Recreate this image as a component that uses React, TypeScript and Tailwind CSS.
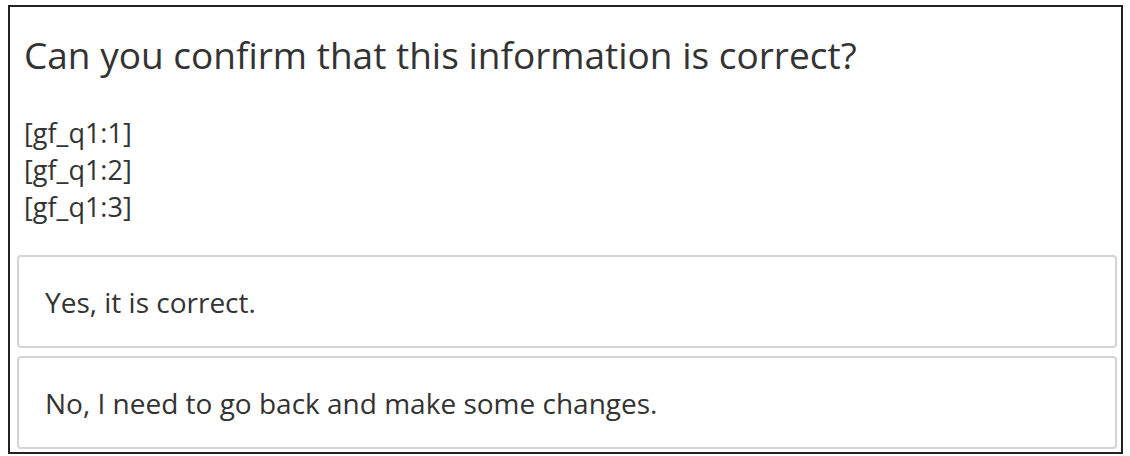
import React from 'react';

const fields = ['[gf_q1:1]', '[gf_q1:2]', '[gf_q1:3]'];
const choices = ['Yes, it is correct.', 'No, I need to go back and make some changes.'];

export default function App() {
    return (
        <div className="w-[1130px] h-[456px] bg-white pl-[8px] pt-[5px]" style={{ fontFamily: '"Open Sans", sans-serif' }}>
            <div className="w-[1115px] h-[449px] border-2 border-[#222] flex flex-col pl-[7px] pr-[4px] text-[#333]">
                {/* Question */}
                <h1 className="pl-[7px] pt-[26px] text-[37px] leading-[44px] font-normal">
                    Can you confirm that this information is correct?
                </h1>

                {/* Merge tags */}
                <div className="pl-[7px] mt-[37px] text-[27px] leading-[37px]">
                    {fields.map((f) => (
                        <div key={f}>{f}</div>
                    ))}
                </div>

                {/* Answers */}
                <div className="mt-[30px] flex flex-col gap-[8px]">
                    {choices.map((c) => (
                        <button
                            key={c}
                            className="h-[93px] w-full text-left flex items-center pl-[26px] border-2 border-[#d4d4d4] rounded-[4px] bg-white text-[28px]"
                        >
                            {c}
                        </button>
                    ))}
                </div>
            </div>
        </div>
    );
}
